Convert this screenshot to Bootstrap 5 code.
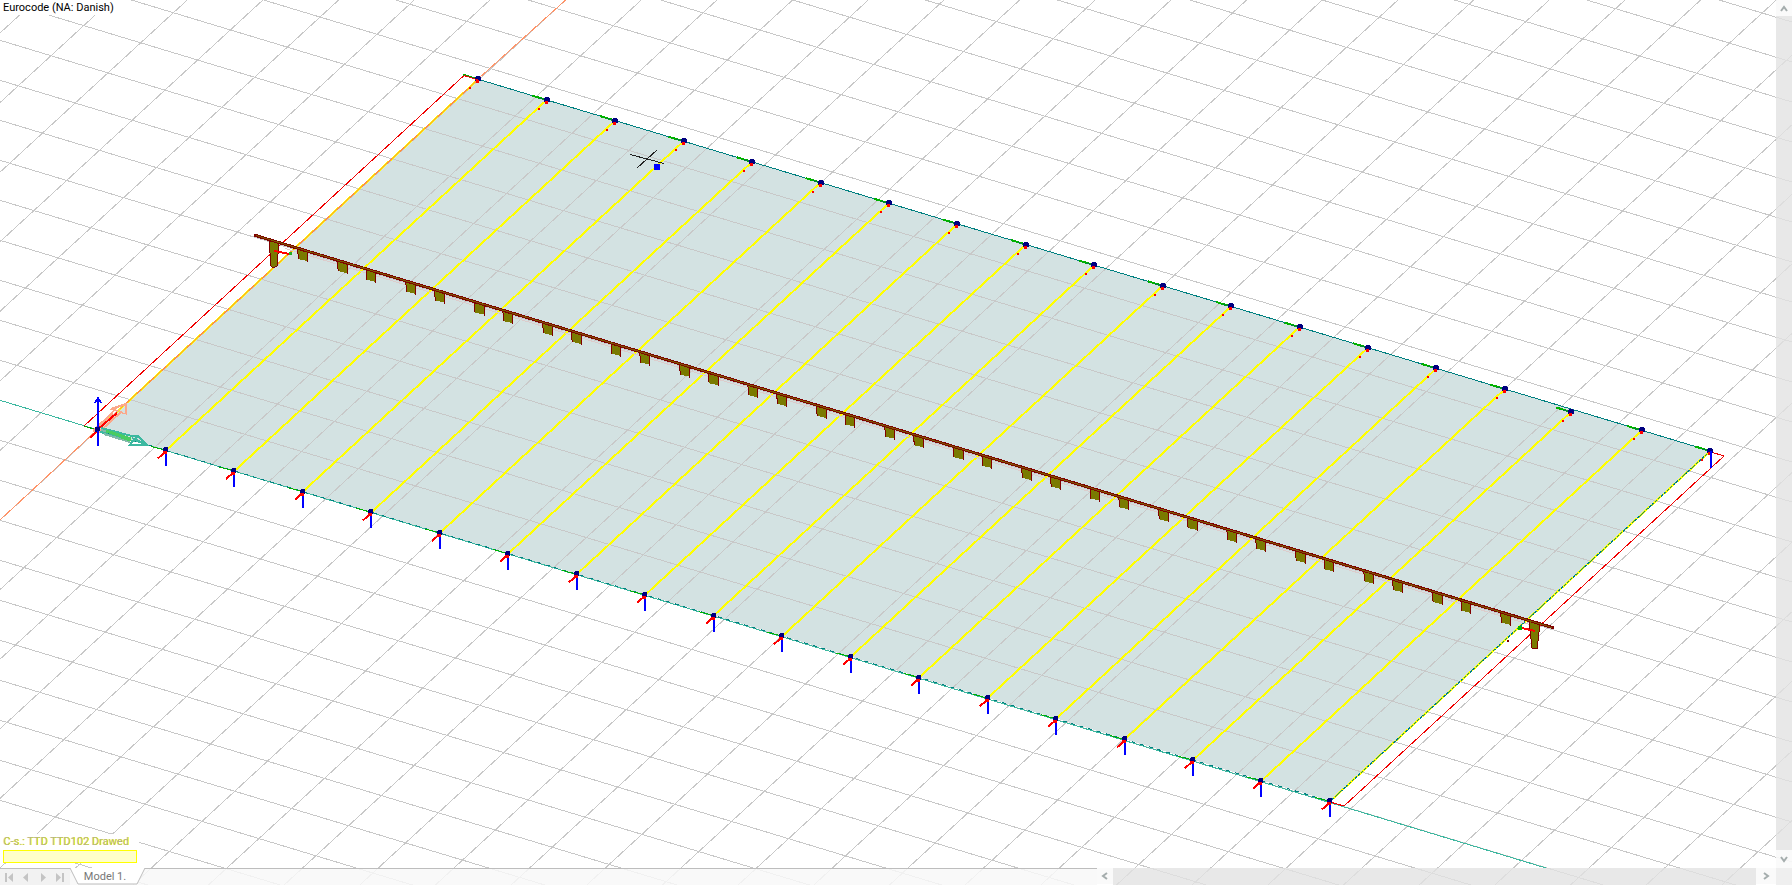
<!DOCTYPE html>
<html lang="en">
<head>
<meta charset="utf-8">
<meta name="viewport" content="width=device-width, initial-scale=1">
<title>Model 1.</title>
<link href="https://cdn.jsdelivr.net/npm/bootstrap@5.3.0/dist/css/bootstrap.min.css" rel="stylesheet">
<script src="https://cdn.jsdelivr.net/npm/bootstrap@5.3.0/dist/js/bootstrap.bundle.min.js"></script>
<style>
  body { font-family: Roboto, "Open Sans", sans-serif; font-size: 11px; line-height: 14px; color: #000; background: #fff; }
  .scene { z-index: 0; shape-rendering: crispEdges; }
  .shell { z-index: 1; }
  .code-label { background: #fff; padding: 1px 2px 0 3px; }
  .section-label { color: #b4b48c; text-shadow: 1px 0 0 #ff0; background: #fff; padding: 1px 10px 0 3px; height: 16px; }
  .section-box { width: 134px; height: 13px; margin-left: 3px; border: 1px solid #ff0; background: #ffffc8; }
  .shell-end { margin-bottom: 5px; }
  .side-scroll { width: 16px; }
  .track { background: rgba(226, 226, 226, .8); }
  .bar-btn { width: 16px; height: 16px; padding: 0; border: 0; background: rgba(250, 250, 250, .9); color: #a5adad; display: flex; align-items: center; justify-content: center; }
  .bar-btn.tall { height: 18px; }
  .bar-btn.wide { width: 20px; }
  .corner { background: #efefef; }
  .foot { height: 17px; }
  .tab-strip { width: 61.2%; background: rgba(248, 248, 248, .85); border-top: 1px solid #bdbdbd; }
  .tab-nav { width: 70px; background: #f2f2f2; }
  .tab-nav button { width: 17px; height: 16px; padding: 0; border: 0; background: none; color: #c4c4c4; display: flex; align-items: center; justify-content: center; }
  .model-tab { width: 76px; height: 17px; margin-top: -1px; border: 0; padding: 0 6px 0 0; background: none; color: #777; position: relative; }
  .model-tab svg { position: absolute; inset: 0; }
  .model-tab span { position: relative; }
</style>
</head>
<body class="overflow-hidden">
<main class="vh-100 position-relative d-flex flex-column">
  <svg id="scene" class="scene position-absolute top-0 start-0 w-100 h-100" viewBox="0 0 1792 885" preserveAspectRatio="xMinYMin slice" role="img" aria-label="Slab model"></svg>

  <div class="shell flex-grow-1 d-flex">
    <div class="flex-grow-1 d-flex flex-column align-items-start">
      <div class="code-label">Eurocode (NA: Danish)</div>
      <div class="section-label mt-auto">C-s.: TTD TTD102 Drawed</div>
      <input class="section-box shell-end" type="text" aria-label="Cross-section">
    </div>
    <div class="side-scroll d-flex flex-column">
      <button class="bar-btn" type="button" aria-label="Scroll up"><svg width="8" height="7"><path d="M1 6L4 2L7 6" fill="none" stroke="currentColor" stroke-width="2"/></svg></button>
      <div class="track flex-grow-1"></div>
      <button class="bar-btn tall" type="button" aria-label="Scroll down"><svg width="8" height="7"><path d="M1 1L4 5L7 1" fill="none" stroke="currentColor" stroke-width="2"/></svg></button>
    </div>
  </div>

  <div class="shell foot d-flex">
    <div class="tab-strip d-flex">
      <div class="tab-nav d-flex">
        <button type="button" aria-label="First"><svg width="8" height="9"><path d="M0 0h2v9H0zM8 0v9L3 4.500z" fill="currentColor"/></svg></button>
        <button type="button" aria-label="Previous"><svg width="6" height="9"><path d="M5 0v9L0 4.500z" fill="currentColor"/></svg></button>
        <button type="button" aria-label="Next"><svg width="6" height="9"><path d="M1 0v9L6 4.500z" fill="currentColor"/></svg></button>
        <button type="button" aria-label="Last"><svg width="8" height="9"><path d="M6 0h2v9H6zM0 0v9L5 4.500z" fill="currentColor"/></svg></button>
      </div>
      <button class="model-tab" type="button"><svg width="76" height="17"><path d="M0 0L8 16H67L75 0z" fill="#fff"/><path d="M0 0L8 16H67L75 0" fill="none" stroke="#bdbdbd"/></svg><span>Model 1.</span></button>
    </div>
    <div class="flex-grow-1 d-flex">
      <button class="bar-btn" type="button" aria-label="Scroll left"><svg width="7" height="8"><path d="M6 1L2 4L6 7" fill="none" stroke="currentColor" stroke-width="2"/></svg></button>
      <div class="track flex-grow-1"></div>
      <button class="bar-btn wide" type="button" aria-label="Scroll right"><svg width="7" height="8"><path d="M1 1L5 4L1 7" fill="none" stroke="currentColor" stroke-width="2"/></svg></button>
      <div class="side-scroll corner"></div>
    </div>
  </div>
</main>
<script>
(() => {
  const out = [];
  const line = (x1, y1, x2, y2, c, w = 1, extra = '') =>
    out.push(`<line x1="${x1}" y1="${y1}" x2="${x2}" y2="${y2}" stroke="${c}" stroke-width="${w}" ${extra}/>`);
  const poly = (p, fill, stroke = 'none') => out.push(`<polygon points="${p}" fill="${fill}" stroke="${stroke}"/>`);
  const rect = (x, y, w, h, c) => out.push(`<rect x="${Math.round(x)}" y="${Math.round(y)}" width="${w}" height="${h}" fill="${c}"/>`);
  const path = (d, c, w = 1) => out.push(`<path d="${d}" fill="none" stroke="${c}" stroke-width="${w}"/>`);

  // slab and the construction grid
  poly('478,79 1710,451 1330,801 97,429.5', '#d3e2e2');
  const S = 0.3023, T = 1.0876;
  for (let n = -24; n <= 13; n++) line(0, 400.3 + 40 * n, 1792, 400.3 + 40 * n + 1792 * S, '#c8c8c8');
  for (let k = -8; k <= 30; k++) line(565.6 + 75.67 * k, 0, 565.6 + 75.67 * k - 885 * T, 885, '#c8c8c8');

  // global axes
  line(0, 520, 97, 430, '#ff9468');
  line(478, 79, 565.6, 0, '#ff9468');
  line(0, 400.3, 1546, 868, '#3cb8a0');

  // ribs
  const N = 18, far = [], near = [];
  for (let i = 0; i <= N; i++) {
    far.push([478.3 + 68.44 * i, 79.3 + 20.65 * i]);
    near.push([97.5 + 68.47 * i, 429.7 + 20.65 * i]);
  }
  far[16] = [1571, 412];
  for (let i = 0; i <= N; i++) line(...far[i], ...near[i], '#ffff00', 2);
  line(...far[0], ...near[0], '#ff9040', 1);
  line(...far[N], ...near[N], '#008080', 1, 'stroke-dasharray="3 1"');
  line(...far[0], ...far[N], '#008080');
  line(...near[0], ...near[N], '#008080', 1, 'stroke-dasharray="4 5"');

  // outer edges
  line(464, 75.5, 84, 426, '#f00000');
  line(1724, 456, 1344, 806, '#f00000');
  line(1711, 452, 1724, 456, '#f00000');
  line(1330, 802, 1344, 806, '#f00000');
  line(84, 426, 97, 430, '#00a000');

  // section through the slab: posts, teeth, flange
  const by = x => 235 + 0.3023 * (x - 254);
  line(285, by(285) + 4, 1530, by(1530) + 4, '#dccccc');
  for (let k = 0; k < N; k++) for (const x of [297.5 + 68.43 * k, 337.2 + 68.43 * k]) {
    poly(`${x},${by(x)} ${x + 1},${by(x) + 11} ${x + 10},${by(x) + 13} ${x + 10},${by(x) + 3}`, '#7a7a00');
    line(x, by(x), x + 1, by(x) + 11, '#800000');
    line(x + 10, by(x) + 3, x + 10, by(x) + 14, '#800000');
  }
  poly('269,240 271,266 273,268 277,266 279,243', '#7a7a00', '#800000');
  poly('1529,620 1532,648 1537,649 1540,624', '#7a7a00', '#800000');
  line(254, 235, 1554, 628, '#800000', 3);
  line(256, 235.5, 1552, 627.5, '#7a5a00', 1);
  line(274, 251, 290, 254, '#f00', 2);
  rect(289, 252, 3, 3, '#22b022');
  line(1522, 628, 1535, 631, '#f00', 2);
  rect(1518, 626, 4, 4, '#00b400');
  rect(1507, 640, 2, 2, '#800000');

  // supports along the far edge
  far.forEach(([x, y]) => {
    line(x - 15, y - 4.5, x, y, '#00b000', 2);
    line(x - 8, y - 2, x, y, '#008040', 1);
    rect(x - 3, y - 2, 6, 4, '#000080');
    rect(x - 2, y - 3, 4, 1, '#000080');
    rect(x - 2, y + 1, 3, 3, '#f00');
    rect(x - 9, y + 8, 2, 2, '#f00');
  });
  line(464, 75.5, 478, 80, '#f00000');
  line(1711, 451, 1711, 468, '#00f', 2);

  // supports along the near edge
  near.forEach(([x, y], i) => {
    const bx = Math.round(x);
    if (i) line(x - 15, y - 4, x, y, '#00b000', 1);
    line(bx, y + 1, bx - 8, y + 8, '#f00', 2);
    line(bx, y, bx, y + 16, '#00f', 2);
    rect(bx - 3, y - 2, 5, 4, '#000080');
    rect(bx - 2, y - 3, 4, 1, '#000080');
    if (i) rect(bx - 3, y + 1, 4, 3, '#f00');
  });

  // origin tripod
  path('M94 429L117 408M98 432L122 412M94 432L120 409M112 409L126 404V414L119 412M112 409L122 412M110 410L126 404', '#fba88a', 1);
  path('M93 431L113 413M99 432L121 412M111 409L126 404V414', '#fba88a', 2);
  path('M98 429L117 413', '#f00', 2);
  path('M101 428L132 436M100 432L130 441M130 436L138 436L147 445H130L133 441M138 436L130 444M132 438L147 445', '#3cb8a0', 2);
  path('M101 430L131 439M104 434L130 442', '#80b8a8', 2);
  path('M106 431L131 439M121 437L131 440', '#48cc60', 3);
  path('M98 445V398M95 403L98 398L101 403', '#00f', 2);
  rect(95, 427, 5, 4, '#000080');

  // pointer
  line(630, 154.5, 664, 163.5, '#222');
  line(657, 150, 637, 168, '#222');
  rect(654, 164, 6, 6, '#00f');

  document.getElementById('scene').innerHTML = out.join('');
})();
</script>
</body>
</html>
